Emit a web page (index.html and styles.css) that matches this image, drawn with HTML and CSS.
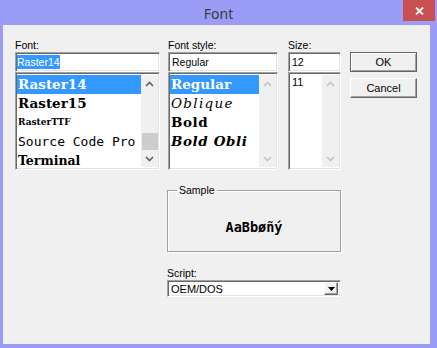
FILE: index.html
```html
<!DOCTYPE html>
<html lang="en">
<head>
  <meta charset="UTF-8" />
  <title>Font</title>
  <link rel="stylesheet" href="styles.css">
</head>
<body>
  <div class="window">
    <div class="titlebar">
      <span class="title">Font</span>
      <span class="close">
        <svg width="9" height="8" viewBox="0 0 9 8"><path d="M1 0.5 L8 7.5 M8 0.5 L1 7.5" stroke="#fff" stroke-width="1.8" fill="none"/></svg>
      </span>
    </div>

    <div class="client">
      <div class="top-row">
        <div class="col col-font">
          <div class="label">Font:</div>
          <div class="edit"><span class="sel-text">Raster14</span></div>
          <div class="list">
            <div class="items">
              <div class="item sel f-raster">Raster14</div>
              <div class="item f-raster">Raster15</div>
              <div class="item f-ttf">RasterTTF</div>
              <div class="item f-source">Source Code Pro</div>
              <div class="item f-terminal">Terminal</div>
            </div>
            <div class="vscroll">
              <div class="arrow">
                <svg width="9" height="6" viewBox="0 0 9 6"><path d="M1 5 L4.5 1.5 L8 5" stroke="#606060" stroke-width="1.6" fill="none"/></svg>
              </div>
              <div class="track"><div class="thumb"></div></div>
              <div class="arrow">
                <svg width="9" height="6" viewBox="0 0 9 6"><path d="M1 1 L4.5 4.5 L8 1" stroke="#606060" stroke-width="1.6" fill="none"/></svg>
              </div>
            </div>
          </div>
        </div>

        <div class="col col-style">
          <div class="label">Font style:</div>
          <div class="edit">Regular</div>
          <div class="list">
            <div class="items">
              <div class="item sel f-raster">Regular</div>
              <div class="item f-oblique">Oblique</div>
              <div class="item f-bold">Bold</div>
              <div class="item f-boldobl">Bold Obli</div>
            </div>
            <div class="vscroll">
              <div class="arrow">
                <svg width="9" height="6" viewBox="0 0 9 6"><path d="M1 5 L4.5 1.5 L8 5" stroke="#c4c4c4" stroke-width="1.6" fill="none"/></svg>
              </div>
              <div class="track"></div>
              <div class="arrow">
                <svg width="9" height="6" viewBox="0 0 9 6"><path d="M1 1 L4.5 4.5 L8 1" stroke="#c4c4c4" stroke-width="1.6" fill="none"/></svg>
              </div>
            </div>
          </div>
        </div>

        <div class="col col-size">
          <div class="label">Size:</div>
          <div class="edit">12</div>
          <div class="list">
            <div class="items">
              <div class="item f-plain">11</div>
            </div>
            <div class="vscroll">
              <div class="arrow">
                <svg width="9" height="6" viewBox="0 0 9 6"><path d="M1 5 L4.5 1.5 L8 5" stroke="#c4c4c4" stroke-width="1.6" fill="none"/></svg>
              </div>
              <div class="track"></div>
              <div class="arrow">
                <svg width="9" height="6" viewBox="0 0 9 6"><path d="M1 1 L4.5 4.5 L8 1" stroke="#c4c4c4" stroke-width="1.6" fill="none"/></svg>
              </div>
            </div>
          </div>
        </div>

        <div class="buttons">
          <button class="btn default">OK</button>
          <button class="btn">Cancel</button>
        </div>
      </div>

      <div class="bottom">
        <div class="group">
          <span class="legend">Sample</span>
          <div class="sample">AaBbøñý</div>
        </div>
        <div class="label script-label">Script:</div>
        <div class="combo">
          <span class="combo-text">OEM/DOS</span>
          <span class="drop">
            <svg width="7" height="4" viewBox="0 0 7 4"><path d="M0 0 H7 L3.5 4 Z" fill="#000"/></svg>
          </span>
        </div>
      </div>
    </div>
  </div>
</body>
</html>
```

FILE: styles.css
```css
html, body {
  margin: 0;
  width: 437px;
  height: 348px;
  overflow: hidden;
  background: #9a9cf6;
}

.window {
  width: 437px;
  height: 348px;
  display: flex;
  flex-direction: column;
  background: #9a9cf6; /* win8 frame colour */
  font-family: 'Liberation Sans', Arial, sans-serif;
  font-size: 10.5px;
  color: #000;
}

.titlebar {
  height: 25px;
  position: relative;
  display: flex;
  justify-content: center;
  align-items: center;
}

.title {
  font-family: 'Noto Sans', sans-serif;
  font-size: 14px;
  color: #3c3c3c;
  margin-top: 1px;
}

.close {
  position: absolute;
  top: 0;
  right: 2px;
  width: 32px;
  height: 21px;
  background: #c75050;
  display: flex;
  justify-content: center;
  align-items: center;
}

.client {
  flex: 1;
  margin: 0 7px 4px 3px;
  padding: 14px 0 0 12px;
  background: #f0f0f0;
}

.label {
  height: 13px;
  line-height: 13px;
  white-space: nowrap;
}

/* top row with the three lists and the buttons */
.top-row {
  display: flex;
  align-items: flex-start;
}

.col-font { width: 145px; margin-right: 8px; }
.col-style { width: 110px; margin-right: 10px; }
.col-size { width: 53px; margin-right: 9px; }

.edit,
.list,
.combo {
  box-sizing: border-box;
  background: #fff;
  border-top: 1px solid #a0a0a0;
  border-left: 1px solid #a0a0a0;
  border-bottom: 1px solid #fff;
  border-right: 1px solid #fff;
  box-shadow: inset 1px 1px 0 #696969, inset -1px -1px 0 #e3e3e3;
}

.edit {
  height: 20px;
  line-height: 18px;
  padding-left: 3px;
  white-space: nowrap;
  overflow: hidden;
}

.sel-text {
  background: #3399ff;
  color: #fff;
  padding: 1px 0;
  margin-left: -2px;
}

.list {
  height: 98px;
  display: flex;
  padding: 1px;
}

.items {
  flex: 1;
  overflow: hidden;
  padding-top: 1px;
}

.item {
  height: 19px;
  line-height: 19px;
  white-space: nowrap;
  padding-left: 1px;
}

.item.sel {
  background: #3399ff;
  color: #fff;
}

/* bitmap-ish serif faces for the raster fonts */
.f-raster { font-family: 'DejaVu Serif', serif; font-weight: bold; font-size: 13.5px; }
.f-ttf { font-family: 'DejaVu Serif', serif; font-weight: bold; font-size: 9px; }
.f-source { font-family: 'DejaVu Sans Mono', monospace; font-size: 13px; }
.f-terminal { font-family: 'DejaVu Serif', serif; font-weight: bold; font-size: 12.5px; }
.f-oblique { font-family: 'DejaVu Serif', serif; font-style: italic; font-size: 13.5px; letter-spacing: 1.3px; }
.f-bold { font-family: 'DejaVu Serif', serif; font-weight: bold; font-size: 13.5px; letter-spacing: 0.6px; }
.f-boldobl { font-family: 'DejaVu Serif', serif; font-weight: bold; font-style: italic; font-size: 13.5px; letter-spacing: 0.6px; }
.f-plain { font-size: 11px; line-height: 15px; height: 15px; padding-left: 2px; }

.vscroll {
  width: 17px;
  margin-top: 1px;
  margin-bottom: 1px;
  background: #f0f0f0;
  display: flex;
  flex-direction: column;
}

.arrow {
  height: 17px;
  display: flex;
  justify-content: center;
  align-items: center;
}

.track {
  flex: 1;
  display: flex;
  flex-direction: column;
  justify-content: flex-end;
}

.thumb {
  height: 17px;
  margin-left: 1px;
  background: #cdcdcd;
}

/* OK / Cancel */
.buttons {
  width: 67px;
  padding-top: 13px;
  display: flex;
  flex-direction: column;
  gap: 6px;
}

.btn {
  height: 20px;
  padding: 0;
  font-family: 'Liberation Sans', Arial, sans-serif;
  font-size: 11px;
  color: #000;
  background: #f0f0f0;
  border-top: 1px solid #fff;
  border-left: 1px solid #fff;
  border-bottom: 1px solid #696969;
  border-right: 1px solid #696969;
  box-shadow: inset -1px -1px 0 #a0a0a0;
}

.btn.default {
  border: 1px solid #646464;
  box-shadow: inset 1px 1px 0 #fff, inset -1px -1px 0 #a0a0a0;
}

/* sample + script */
.bottom {
  padding-left: 152px;
}

.group {
  position: relative;
  box-sizing: border-box;
  width: 174px;
  height: 62px;
  margin-top: 20px;
  border: 1px solid #a0a0a0;
  box-shadow: inset 1px 1px 0 #fff, 1px 1px 0 #fff;
  display: flex;
  justify-content: center;
  align-items: center;
  padding-top: 12px;
}

.legend {
  position: absolute;
  top: -7px;
  left: 9px;
  padding: 0 2px;
  line-height: 13px;
  background: #f0f0f0;
}

.sample {
  font-family: 'DejaVu Sans Mono', monospace;
  font-weight: bold;
  font-size: 13.5px;
}

.script-label {
  margin-top: 15px;
}

.combo {
  width: 174px;
  height: 17px;
  display: flex;
  align-items: center;
  padding: 0 2px 0 3px;
  font-size: 11px;
}

.combo-text {
  flex: 1;
}

.drop {
  box-sizing: border-box;
  width: 14px;
  height: 13px;
  background: #f0f0f0;
  border-top: 1px solid #fff;
  border-left: 1px solid #fff;
  border-bottom: 1px solid #696969;
  border-right: 1px solid #696969;
  box-shadow: inset -1px -1px 0 #a0a0a0;
  display: flex;
  justify-content: center;
  align-items: center;
}
```
